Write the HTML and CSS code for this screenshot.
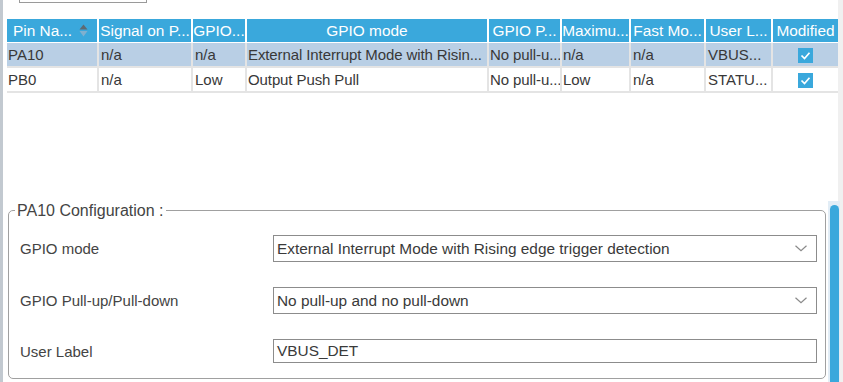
FILE: index.html
```html
<!DOCTYPE html>
<html>
<head>
<meta charset="utf-8">
<link rel="stylesheet" href="styles.css">
</head>
<body>
<div class="leftbar"></div>
<div class="main">
  <div class="upper">
    <div class="upper-content">
      <div class="topbtn"></div>
      <table class="pins">
        <thead>
          <tr>
            <th class="c1"><span class="pin-head">Pin Na...<svg class="sort" width="9" height="13" viewBox="0 0 9 13"><path d="M4.5 0.5 L8.5 5.5 L0.5 5.5 Z" fill="#5e6a72"/><path d="M0.5 7 L8.5 7 L4.5 12.5 Z" fill="#7fb0cf"/></svg></span></th>
            <th class="c2">Signal on P...</th>
            <th class="c3">GPIO...</th>
            <th class="c4">GPIO mode</th>
            <th class="c5">GPIO P...</th>
            <th class="c6">Maximu...</th>
            <th class="c7">Fast Mo...</th>
            <th class="c8">User L...</th>
            <th class="c9">Modified</th>
          </tr>
        </thead>
        <tbody>
          <tr class="selected">
            <td>PA10</td>
            <td>n/a</td>
            <td>n/a</td>
            <td class="tight">External Interrupt Mode with Risin...</td>
            <td class="tight">No pull-u...</td>
            <td class="tight">n/a</td>
            <td>n/a</td>
            <td>VBUS...</td>
            <td class="chk"><svg width="15" height="15" viewBox="0 0 15 15"><rect width="15" height="15" fill="#3aa8dc"/><polyline points="3.5,7.5 6.5,10.5 11.5,4.8" fill="none" stroke="#fff" stroke-width="1.7"/></svg></td>
          </tr>
          <tr>
            <td>PB0</td>
            <td>n/a</td>
            <td>Low</td>
            <td class="tight">Output Push Pull</td>
            <td class="tight">No pull-u...</td>
            <td class="tight">Low</td>
            <td>n/a</td>
            <td>STATU...</td>
            <td class="chk"><svg width="15" height="15" viewBox="0 0 15 15"><rect width="15" height="15" fill="#3aa8dc"/><polyline points="3.5,7.5 6.5,10.5 11.5,4.8" fill="none" stroke="#fff" stroke-width="1.7"/></svg></td>
          </tr>
        </tbody>
      </table>
    </div>
    <div class="upper-rail"></div>
  </div>
  <div class="lower">
    <div class="lower-content">
      <fieldset class="config">
        <legend>PA10 Configuration :</legend>
        <div class="form">
          <div class="label">GPIO mode</div>
          <div class="field select">External Interrupt Mode with Rising edge trigger detection<svg class="chev" width="12" height="7" viewBox="0 0 12 7"><polyline points="0.5,0.8 6,5.8 11.5,0.8" fill="none" stroke="#8a8a8a" stroke-width="1.2"/></svg></div>
          <div class="label">GPIO Pull-up/Pull-down</div>
          <div class="field select">No pull-up and no pull-down<svg class="chev" width="12" height="7" viewBox="0 0 12 7"><polyline points="0.5,0.8 6,5.8 11.5,0.8" fill="none" stroke="#8a8a8a" stroke-width="1.2"/></svg></div>
          <div class="label">User Label</div>
          <div class="field text">VBUS_DET</div>
        </div>
      </fieldset>
    </div>
    <div class="vscroll"><div class="thumb"></div></div>
    <div class="lower-rail"></div>
  </div>
</div>
</body>
</html>
```

FILE: styles.css
```css
* { box-sizing: border-box; }
html, body { margin: 0; padding: 0; }
body {
  width: 843px;
  height: 382px;
  overflow: hidden;
  display: flex;
  background: #fff;
  font-family: "Liberation Sans", Arial, sans-serif;
  font-size: 15px;
  color: #383838;
}
.leftbar { width: 3px; flex: none; background: #c2c9d0; }
.main { flex: 1; display: flex; flex-direction: column; min-width: 0; }

.upper { height: 201px; display: flex; flex: none; }
.upper-content { width: 835px; padding-left: 4px; }
.upper-rail { flex: 1; background: #f0f0f0; }

.topbtn {
  width: 128px;
  height: 3px;
  margin-left: 12px;
  margin-bottom: 16px;
  border: 1px solid #9a9a9a;
  border-top: none;
}

.pins {
  table-layout: fixed;
  width: 831px;
  border-collapse: separate;
  border-spacing: 0;
}
.pins th {
  background: #3aa8dc;
  color: #fff;
  font-weight: normal;
  font-size: 15.4px;
  height: 24px;
  padding: 0;
  border-right: 2px solid #fff;
  border-bottom: 1px solid #fff;
  text-align: center;
  white-space: nowrap;
  overflow: hidden;
  vertical-align: middle;
}
.pins th.c9 { border-right: none; }
.pins th.c1 { text-align: left; padding-left: 6px; }
.pins .c1 { width: 92px; }
.pins .c2 { width: 94px; }
.pins .c3 { width: 54px; }
.pins .c4 { width: 242px; }
.pins .c5 { width: 73px; }
.pins .c6 { width: 69px; }
.pins .c7 { width: 75px; }
.pins .c8 { width: 67px; }
.pins .c9 { width: 65px; }
.pin-head { display: inline-flex; align-items: center; gap: 7px; }
.sort { display: block; }
.pins td {
  height: 25px;
  padding: 0 0 0 2px;
  border-right: 2px solid #e4e4e4;
  border-bottom: 2px solid #e4e4e4;
  white-space: nowrap;
  overflow: hidden;
  vertical-align: middle;
}
.pins td:first-child { padding-left: 1px; }
.pins td.tight { padding-left: 1px; letter-spacing: -0.1px; }
.pins td:last-child { border-right: none; }
.pins tr.selected td { background: #b9cfe5; }
.pins td.chk { text-align: center; padding: 0; }
.pins td.chk svg { display: inline-block; vertical-align: middle; }

.lower { flex: 1; display: flex; min-height: 0; }
.lower-content { width: 825px; padding-left: 5px; }
.vscroll {
  width: 12px;
  background: #e2edf6;
  padding: 4px 1px 0 2px;
}
.thumb {
  height: 100%;
  background: #3aa8dc;
  border-radius: 5px 5px 0 0;
}
.lower-rail { flex: 1; background: #f0f0f0; }

.config {
  margin: 1px 0 0 0;
  width: 818px;
  padding: 0;
  border: 1px solid #a0a0a0;
  border-radius: 5px;
  min-width: 0;
}
.config legend {
  padding: 0 3px 0 2px;
  margin-left: 6px;
  line-height: 17px;
  font-size: 16px;
  color: #444;
}
.form {
  display: grid;
  grid-template-columns: 253px 544px;
  grid-template-rows: 27px 27px 24px;
  row-gap: 25px;
  padding: 16px 8px 15px 11px;
  align-items: center;
}
.label { color: #444; }
.field {
  height: 100%;
  border: 1px solid #8c8c8c;
  padding-left: 3px;
  display: flex;
  align-items: center;
  color: #3a3a3a;
  font-size: 15.4px;
}
.select { justify-content: space-between; padding-right: 9px; }
.chev { display: block; }
```
